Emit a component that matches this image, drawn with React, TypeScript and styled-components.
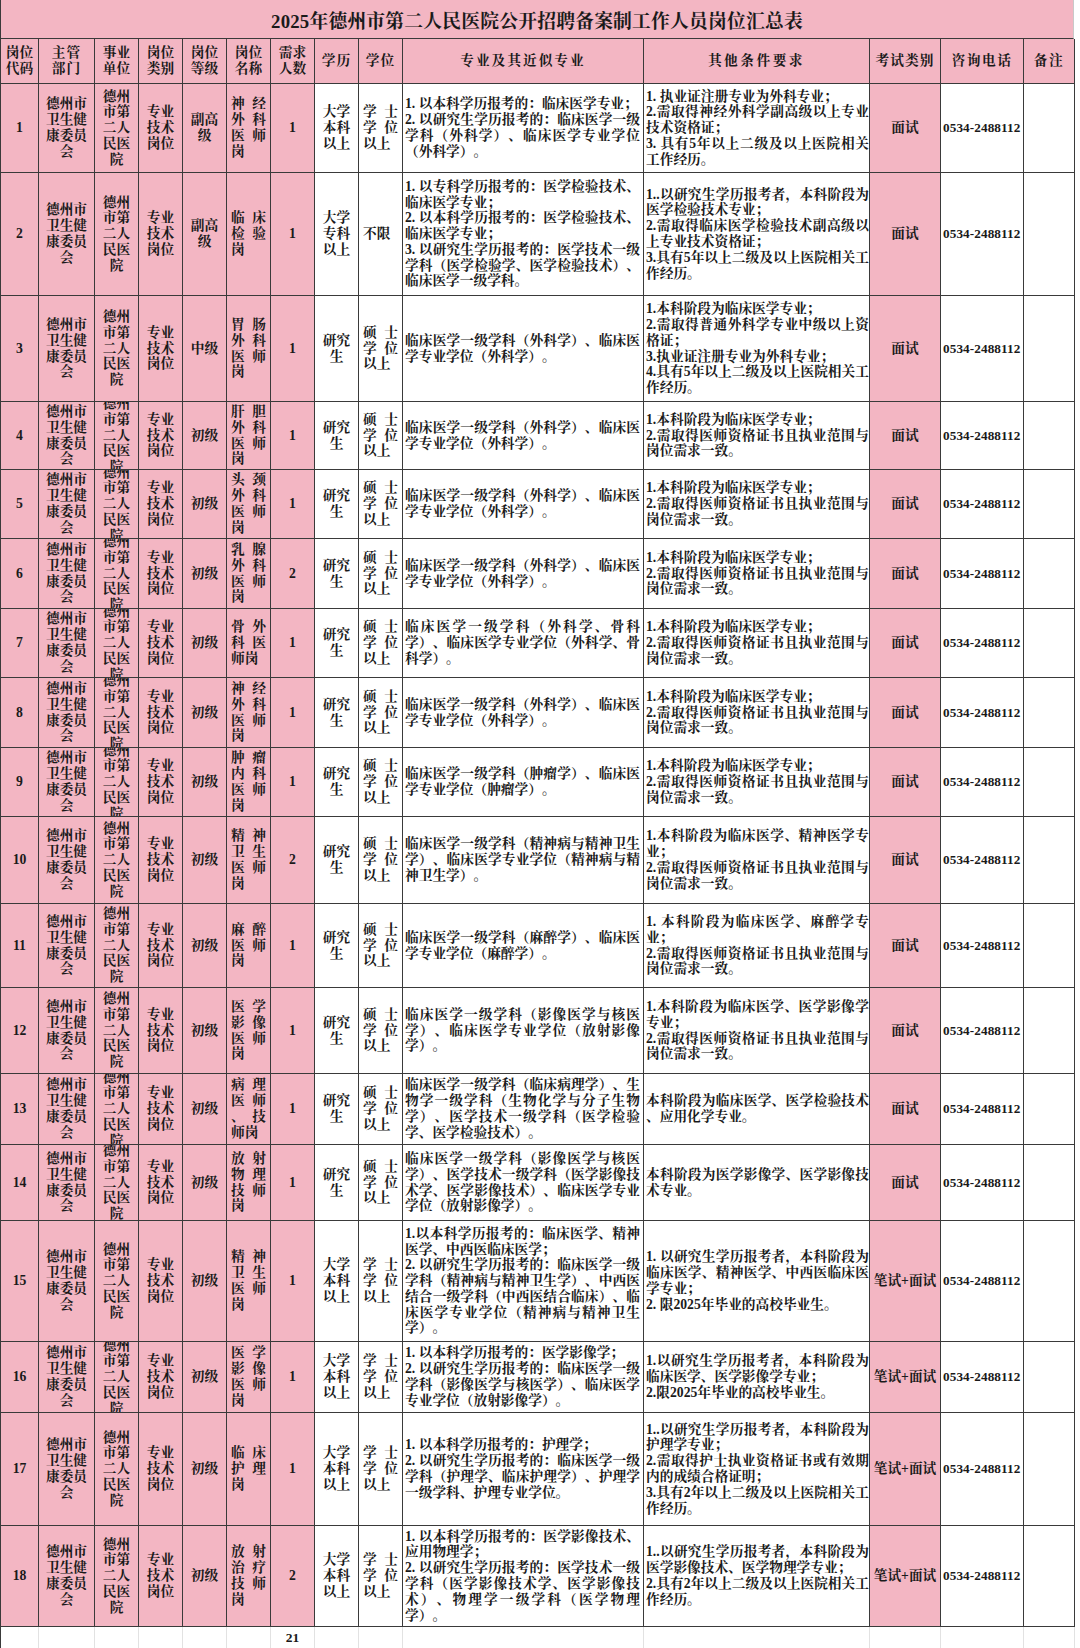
import styled, { createGlobalStyle } from 'styled-components'

const GlobalStyle = createGlobalStyle`
  html, body {
    margin: 0;
    padding: 0;
    background: #ffffff;
  }
  body {
    font-family: "Liberation Serif", "Noto Serif CJK SC", "Noto Sans CJK SC", serif;
    color: #1a1a1a;
    text-spacing-trim: space-all;
  }
`

const PINK = '#f3b6c3'
const LINE = '#3a3a3a'

// column widths of the sheet
const COLS = [38, 56, 44, 44, 44, 44, 44, 44, 44, 241, 226, 71, 83, 51]
const GRID = COLS.map((c) => c + 'px').join(' ')

const Sheet = styled.div`
  width: 1074px;
  display: flex;
  flex-direction: column;
  border-left: 1px solid ${LINE};
  box-sizing: border-box;
`

const TitleBar = styled.div`
  height: 39px;
  background: ${PINK};
  border-bottom: 1px solid ${LINE};
  border-right: 1px solid #c9c9c9;
  box-sizing: border-box;
  display: flex;
  align-items: center;
  justify-content: center;
  font-size: 18.8px;
  font-weight: 700;
  letter-spacing: 0.2px;
`

const Row = styled.div<{ $h: number }>`
  display: grid;
  grid-template-columns: ${GRID};
  height: ${(p) => p.$h}px;
`

const Cell = styled.div<{ $pink?: boolean }>`
  box-sizing: border-box;
  border-right: 1px solid ${LINE};
  border-bottom: 1px solid ${LINE};
  background: ${(p) => (p.$pink ? PINK : '#ffffff')};
  display: flex;
  align-items: center;
  justify-content: center;
  overflow: hidden;
  font-size: 13.7px;
  line-height: 15.8px;
  font-weight: 700;
`

const HeadCell = styled(Cell)<{ $spread?: number }>`
  text-align: center;
  white-space: pre-line;
  letter-spacing: ${(p) => p.$spread ?? 0}px;
  padding: 0 2px;
`

const CenterCell = styled(Cell)<{ $pad?: number }>`
  text-align: center;
  padding: 0 ${(p) => p.$pad ?? 6}px;
`

const Spread = styled.div<{ $anywhere?: boolean }>`
  width: 100%;
  text-align: justify;
  line-break: ${(p) => (p.$anywhere ? 'anywhere' : 'auto')};
`

const SpreadCell = styled(Cell)`
  padding: 0 4px;
`

const TextCell = styled(Cell)<{ $padR: number }>`
  padding: 0 ${(p) => p.$padR}px 0 2px;
`

const Para = styled.div<{ $anywhere?: boolean }>`
  width: 100%;
  text-align: justify;
  white-space: pre-line;
  line-break: ${(p) => (p.$anywhere ? 'anywhere' : 'auto')};
`

const PhoneCell = styled(Cell)`
  justify-content: flex-start;
  padding-left: 2px;
  font-size: 13.2px;
  letter-spacing: 0.1px;
`

const FootRow = styled(Row)`
  border-bottom: 1px solid #ececec;
`

const FootCell = styled.div`
  box-sizing: border-box;
  border-right: 1px solid #e2e2e2;
  display: flex;
  align-items: center;
  justify-content: center;
  font-size: 13.5px;
  font-weight: 700;
`

type Post = {
  code: number
  grade: string
  name: string
  count: number
  edu: string
  degree: string
  major: string
  cond: string
  exam: string
  h: number
  loose?: boolean
}

const SURG = '临床医学一级学科（外科学）、临床医学专业学位（外科学）。'
const STD = '1.本科阶段为临床医学专业；\n2.需取得医师资格证书且执业范围与岗位需求一致。'
const MASTER = '硕士学位以上'
const BACH = '学士学位以上'

const POSTS: Post[] = [
  {
    code: 1, grade: '副高级', name: '神经外科医师岗', count: 1, edu: '大学本科以上', degree: BACH,
    major: '1. 以本科学历报考的：临床医学专业；\n2. 以研究生学历报考的：临床医学一级学科（外科学）、临床医学专业学位（外科学）。',
    cond: '1. 执业证注册专业为外科专业；\n2.需取得神经外科学副高级以上专业技术资格证；\n3. 具有5年以上二级及以上医院相关工作经历。',
    exam: '面试', h: 89,
  },
  {
    code: 2, grade: '副高级', name: '临床检验岗', count: 1, edu: '大学专科以上', degree: '不限',
    major: '1. 以专科学历报考的：医学检验技术、临床医学专业；\n2. 以本科学历报考的：医学检验技术、临床医学专业；\n3. 以研究生学历报考的：医学技术一级学科（医学检验学、医学检验技术）、临床医学一级学科。',
    cond: '1..以研究生学历报考者，本科阶段为医学检验技术专业；\n2.需取得临床医学检验技术副高级以上专业技术资格证；\n3.具有5年以上二级及以上医院相关工作经历。',
    exam: '面试', h: 123,
  },
  {
    code: 3, grade: '中级', name: '胃肠外科医师岗', count: 1, edu: '研究生', degree: MASTER,
    major: SURG,
    cond: '1.本科阶段为临床医学专业；\n2.需取得普通外科学专业中级以上资格证；\n3.执业证注册专业为外科专业；\n4.具有5年以上二级及以上医院相关工作经历。',
    exam: '面试', h: 106,
  },
  { code: 4, grade: '初级', name: '肝胆外科医师岗', count: 1, edu: '研究生', degree: MASTER, major: SURG, cond: STD, exam: '面试', h: 68 },
  { code: 5, grade: '初级', name: '头颈外科医师岗', count: 1, edu: '研究生', degree: MASTER, major: SURG, cond: STD, exam: '面试', h: 69 },
  { code: 6, grade: '初级', name: '乳腺外科医师岗', count: 2, edu: '研究生', degree: MASTER, major: SURG, cond: STD, exam: '面试', h: 70 },
  {
    code: 7, grade: '初级', name: '骨外科医师岗', count: 1, edu: '研究生', degree: MASTER,
    major: '临床医学一级学科（外科学、骨科学）、临床医学专业学位（外科学、骨科学）。', cond: STD, exam: '面试', h: 69,
  },
  { code: 8, grade: '初级', name: '神经外科医师岗', count: 1, edu: '研究生', degree: MASTER, major: SURG, cond: STD, exam: '面试', h: 70 },
  {
    code: 9, grade: '初级', name: '肿瘤内科医师岗', count: 1, edu: '研究生', degree: MASTER,
    major: '临床医学一级学科（肿瘤学）、临床医学专业学位（肿瘤学）。', cond: STD, exam: '面试', h: 69,
  },
  {
    code: 10, grade: '初级', name: '精神卫生医师岗', count: 2, edu: '研究生', degree: MASTER,
    major: '临床医学一级学科（精神病与精神卫生学）、临床医学专业学位（精神病与精神卫生学）。',
    cond: '1.本科阶段为临床医学、精神医学专业；\n2.需取得医师资格证书且执业范围与岗位需求一致。',
    exam: '面试', h: 87,
  },
  {
    code: 11, grade: '初级', name: '麻醉医师岗', count: 1, edu: '研究生', degree: MASTER,
    major: '临床医学一级学科（麻醉学）、临床医学专业学位（麻醉学）。',
    cond: '1. 本科阶段为临床医学、麻醉学专业；\n2.需取得医师资格证书且执业范围与岗位需求一致。',
    exam: '面试', h: 84,
  },
  {
    code: 12, grade: '初级', name: '医学影像医师岗', count: 1, edu: '研究生', degree: MASTER,
    major: '临床医学一级学科（影像医学与核医学）、临床医学专业学位（放射影像学）。',
    cond: '1.本科阶段为临床医学、医学影像学专业；\n2.需取得医师资格证书且执业范围与岗位需求一致。',
    exam: '面试', h: 86,
  },
  {
    code: 13, grade: '初级', name: '病理医师、技师岗', count: 1, edu: '研究生', degree: MASTER,
    major: '临床医学一级学科（临床病理学）、生物学一级学科（生物化学与分子生物学）、医学技术一级学科（医学检验学、医学检验技术）。',
    cond: '本科阶段为临床医学、医学检验技术、应用化学专业。',
    exam: '面试', h: 71, loose: true,
  },
  {
    code: 14, grade: '初级', name: '放射物理技师岗', count: 1, edu: '研究生', degree: MASTER,
    major: '临床医学一级学科（影像医学与核医学）、医学技术一级学科（医学影像技术学、医学影像技术）、临床医学专业学位（放射影像学）。',
    cond: '本科阶段为医学影像学、医学影像技术专业。',
    exam: '面试', h: 76,
  },
  {
    code: 15, grade: '初级', name: '精神卫生医师岗', count: 1, edu: '大学本科以上', degree: BACH,
    major: '1.以本科学历报考的：临床医学、精神医学、中西医临床医学；\n2. 以研究生学历报考的：临床医学一级学科（精神病与精神卫生学）、中西医结合一级学科（中西医结合临床）、临床医学专业学位（精神病与精神卫生学）。',
    cond: '1. 以研究生学历报考者，本科阶段为临床医学、精神医学、中西医临床医学专业；\n2. 限2025年毕业的高校毕业生。',
    exam: '笔试+面试', h: 121,
  },
  {
    code: 16, grade: '初级', name: '医学影像医师岗', count: 1, edu: '大学本科以上', degree: BACH,
    major: '1. 以本科学历报考的：医学影像学；\n2. 以研究生学历报考的：临床医学一级学科（影像医学与核医学）、临床医学专业学位（放射影像学）。',
    cond: '1.以研究生学历报考者，本科阶段为临床医学、医学影像学专业；\n2.限2025年毕业的高校毕业生。',
    exam: '笔试+面试', h: 71,
  },
  {
    code: 17, grade: '初级', name: '临床护理岗', count: 1, edu: '大学本科以上', degree: BACH,
    major: '1. 以本科学历报考的：护理学；\n2. 以研究生学历报考的：临床医学一级学科（护理学、临床护理学）、护理学一级学科、护理专业学位。',
    cond: '1..以研究生学历报考者，本科阶段为护理学专业；\n2.需取得护士执业资格证书或有效期内的成绩合格证明；\n3.具有2年以上二级及以上医院相关工作经历。',
    exam: '笔试+面试', h: 113,
  },
  {
    code: 18, grade: '初级', name: '放射治疗技师岗', count: 2, edu: '大学本科以上', degree: BACH,
    major: '1. 以本科学历报考的：医学影像技术、应用物理学；\n2. 以研究生学历报考的：医学技术一级学科（医学影像技术学、医学影像技术）、物理学一级学科（医学物理学）。',
    cond: '1..以研究生学历报考者，本科阶段为医学影像技术、医学物理学专业；\n2.具有2年以上二级及以上医院相关工作经历。',
    exam: '笔试+面试', h: 101,
  },
]

const HEADS: { t: string; s?: number }[] = [
  { t: '岗位\n代码' },
  { t: '主管\n部门', s: 1 },
  { t: '事业\n单位' },
  { t: '岗位\n类别' },
  { t: '岗位\n等级' },
  { t: '岗位\n名称' },
  { t: '需求\n人数' },
  { t: '学历', s: 1 },
  { t: '学位', s: 1 },
  { t: '专业及其近似专业', s: 2 },
  { t: '其他条件要求', s: 2.5 },
  { t: '考试类别', s: 1 },
  { t: '咨询电话', s: 1.5 },
  { t: '备注', s: 1.5 },
]

function PostRow({ p }: { p: Post }) {
  return (
    <Row $h={p.h}>
      <CenterCell $pink $pad={2}>{p.code}</CenterCell>
      <CenterCell $pink>德州市卫生健康委员会</CenterCell>
      <CenterCell $pink>德州市第二人民医院</CenterCell>
      <CenterCell $pink>专业技术岗位</CenterCell>
      <CenterCell $pink>{p.grade}</CenterCell>
      <SpreadCell $pink>
        <Spread $anywhere>{p.name}</Spread>
      </SpreadCell>
      <CenterCell $pink>{p.count}</CenterCell>
      <CenterCell>{p.edu}</CenterCell>
      <SpreadCell>
        <Spread>{p.degree}</Spread>
      </SpreadCell>
      <TextCell $padR={3}>
        <Para>{p.major}</Para>
      </TextCell>
      <TextCell $padR={0}>
        <Para $anywhere={p.loose}>{p.cond}</Para>
      </TextCell>
      <CenterCell $pink $pad={1}>{p.exam}</CenterCell>
      <PhoneCell>0534-2488112</PhoneCell>
      <Cell />
    </Row>
  )
}

export default function App() {
  return (
    <>
      <GlobalStyle />
      <Sheet>
        <TitleBar>2025年德州市第二人民医院公开招聘备案制工作人员岗位汇总表</TitleBar>
        <Row $h={45}>
          {HEADS.map((h) => (
            <HeadCell key={h.t} $pink $spread={h.s}>
              {h.t}
            </HeadCell>
          ))}
        </Row>
        {POSTS.map((p) => (
          <PostRow key={p.code} p={p} />
        ))}
        <FootRow $h={21}>
          {COLS.map((_, i) => (
            <FootCell key={i}>{i === 6 ? POSTS.reduce((s, p) => s + p.count, 0) : ''}</FootCell>
          ))}
        </FootRow>
      </Sheet>
    </>
  )
}
